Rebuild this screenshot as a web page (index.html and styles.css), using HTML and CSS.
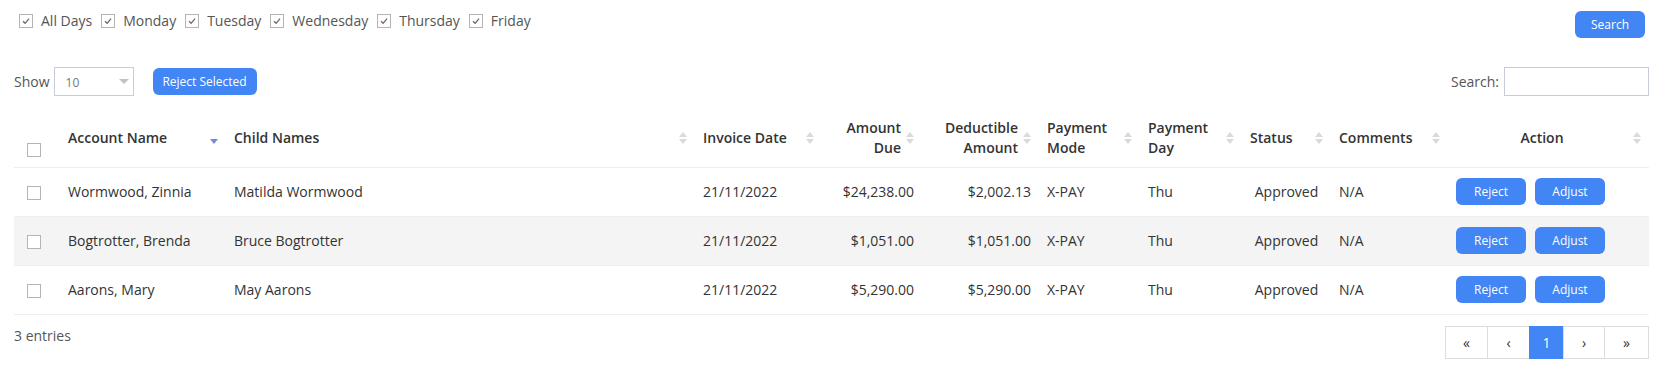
FILE: index.html
```html
<!DOCTYPE html>
<html lang="en">
	<head>
		<meta charset="utf-8">

		<title>Invoice Approvals</title>

		<link rel="stylesheet" href="styles.css">
	</head>
	<body>
	<div class="page">
		<div class="filters">
			<div class="days">
				<label class="day"><span class="box"><svg viewBox="0 0 14 14"><polyline points="3.5,7.2 6,9.7 10.5,4.2"/></svg></span>All Days</label>
				<label class="day"><span class="box"><svg viewBox="0 0 14 14"><polyline points="3.5,7.2 6,9.7 10.5,4.2"/></svg></span>Monday</label>
				<label class="day"><span class="box"><svg viewBox="0 0 14 14"><polyline points="3.5,7.2 6,9.7 10.5,4.2"/></svg></span>Tuesday</label>
				<label class="day"><span class="box"><svg viewBox="0 0 14 14"><polyline points="3.5,7.2 6,9.7 10.5,4.2"/></svg></span>Wednesday</label>
				<label class="day"><span class="box"><svg viewBox="0 0 14 14"><polyline points="3.5,7.2 6,9.7 10.5,4.2"/></svg></span>Thursday</label>
				<label class="day"><span class="box"><svg viewBox="0 0 14 14"><polyline points="3.5,7.2 6,9.7 10.5,4.2"/></svg></span>Friday</label>
			</div>
			<button class="btn btn-search">Search</button>
		</div>

		<div class="toolbar">
			<div class="length">
				<span>Show</span>
				<span class="select">10<i class="caret"></i></span>
				<button class="btn btn-wide">Reject Selected</button>
			</div>
			<div class="search">
				<span>Search:</span>
				<input type="text">
			</div>
		</div>

		<table class="grid">
			<colgroup>
				<col style="width:46px">
				<col style="width:166px">
				<col style="width:469px">
				<col style="width:127px">
				<col style="width:100px">
				<col style="width:117px">
				<col style="width:101px">
				<col style="width:102px">
				<col style="width:89px">
				<col style="width:117px">
				<col style="width:201px">
			</colgroup>
			<thead>
				<tr>
					<th class="check"><span class="box"></span></th>
					<th class="sort-desc">Account Name</th>
					<th class="sort">Child Names</th>
					<th class="sort">Invoice Date</th>
					<th class="sort num">Amount<br>Due</th>
					<th class="sort num">Deductible<br>Amount</th>
					<th class="sort">Payment<br>Mode</th>
					<th class="sort">Payment<br>Day</th>
					<th class="sort">Status</th>
					<th class="sort">Comments</th>
					<th class="sort center">Action</th>
				</tr>
			</thead>
			<tbody>
				<tr>
					<td class="check"><span class="box"></span></td>
					<td>Wormwood, Zinnia</td>
					<td>Matilda Wormwood</td>
					<td>21/11/2022</td>
					<td class="num">$24,238.00</td>
					<td class="num">$2,002.13</td>
					<td>X-PAY</td>
					<td>Thu</td>
					<td class="center">Approved</td>
					<td>N/A</td>
					<td><button class="btn btn-row">Reject</button><button class="btn btn-row">Adjust</button></td>
				</tr>
				<tr class="odd">
					<td class="check"><span class="box"></span></td>
					<td>Bogtrotter, Brenda</td>
					<td>Bruce Bogtrotter</td>
					<td>21/11/2022</td>
					<td class="num">$1,051.00</td>
					<td class="num">$1,051.00</td>
					<td>X-PAY</td>
					<td>Thu</td>
					<td class="center">Approved</td>
					<td>N/A</td>
					<td><button class="btn btn-row">Reject</button><button class="btn btn-row">Adjust</button></td>
				</tr>
				<tr>
					<td class="check"><span class="box"></span></td>
					<td>Aarons, Mary</td>
					<td>May Aarons</td>
					<td>21/11/2022</td>
					<td class="num">$5,290.00</td>
					<td class="num">$5,290.00</td>
					<td>X-PAY</td>
					<td>Thu</td>
					<td class="center">Approved</td>
					<td>N/A</td>
					<td><button class="btn btn-row">Reject</button><button class="btn btn-row">Adjust</button></td>
				</tr>
			</tbody>
		</table>

		<div class="footer">
			<div class="info">3 entries</div>
			<ul class="pager">
				<li class="first">&laquo;</li>
				<li class="prev">&lsaquo;</li>
				<li class="current">1</li>
				<li class="next">&rsaquo;</li>
				<li class="last">&raquo;</li>
			</ul>
		</div>
	</div>
	</body>
</html>
```

FILE: styles.css
```css
body {
	margin: 0;
	background: #fff;
	color: #333;

	font-family: "Open Sans", "Liberation Sans", sans-serif;
	font-size: 14px;
	line-height: 20px;
}

div.page
{
	padding: 0 11px 0 14px;
}

/* buttons */

.btn {
	display: inline-block;
	height: 27px;
	padding: 0;
	border: none;
	border-radius: 6px;

	background: #4285f4;
	color: #fff;

	font-family: inherit;
	font-size: 12px;
	line-height: 27px;
	text-align: center;
}

.btn-search { width: 70px; }
.btn-wide { width: 104px; }

.btn-row {
	width: 70px;
	vertical-align: middle;
}

.btn-row + .btn-row {
	margin-left: 9px;
}

/* checkboxes */

.box {
	display: inline-block;
	box-sizing: border-box;
	width: 14px;
	height: 14px;
	border: 1px solid #b4b4b4;
	background: #fff;
	vertical-align: middle;
}

.box svg {
	display: block;
	width: 12px;
	height: 12px;
	fill: none;
	stroke: #6a6a6a;
	stroke-width: 1.5;
}

/* day filters */

div.filters {
	display: flex;
	justify-content: space-between;
	align-items: flex-start;
	height: 27px;
	padding: 11px 4px 0 5px;
}

div.days {
	display: flex;
	align-items: center;
}

label.day {
	display: flex;
	align-items: center;
	margin-right: 9px;
	color: #555;
}

label.day .box {
	margin-right: 8px;
}

/* length + search bar */

div.toolbar {
	display: flex;
	justify-content: space-between;
	align-items: center;
	height: 29px;
	margin-top: 29px;
	color: #555;
}

div.length,
div.search {
	display: flex;
	align-items: center;
}

.select {
	position: relative;
	box-sizing: border-box;
	width: 80px;
	height: 29px;
	margin: 0 19px 0 4px;
	padding-left: 11px;
	border: 1px solid #c6cdd9;

	color: #777;
	font-size: 12px;
	line-height: 29px;
}

.select .caret {
	position: absolute;
	right: 4px;
	top: 11px;
	border-left: 5px solid transparent;
	border-right: 5px solid transparent;
	border-top: 5px solid #c2c2c2;
}

div.search input {
	box-sizing: border-box;
	width: 145px;
	height: 29px;
	margin: 0 0 0 5px;
	border: 1px solid #c6cdd9;
	font-family: inherit;
}

/* table */

table.grid {
	width: 100%;
	margin-top: 12px;
	border-collapse: collapse;
	table-layout: fixed;
}

table.grid th {
	position: relative;
	padding: 10px 21px 9px 8px;
	border-bottom: 1px solid #eee;

	font-weight: 600;
	text-align: left;
	vertical-align: middle;
}

table.grid td {
	padding: 10px 8px 11px;
	border-top: 1px solid #eee;
	vertical-align: middle;
	white-space: nowrap;
}

table.grid tbody tr:last-child td {
	border-bottom: 1px solid #eee;
}

table.grid tr.odd td {
	background: #f4f4f4;
}

table.grid th.check {
	padding: 0 0 10px 13px;
	vertical-align: bottom;
}

table.grid th.check .box {
	display: block;
}

table.grid td.check {
	padding-left: 13px;
}

table.grid .num { text-align: right; }
table.grid .center { text-align: center; }

/* sort arrows */

th.sort::before,
th.sort::after,
th.sort-desc::after {
	content: "";
	position: absolute;
	right: 8px;
	border-left: 4px solid transparent;
	border-right: 4px solid transparent;
}

th.sort::before {
	top: 50%;
	margin-top: -6px;
	border-bottom: 5px solid #dadada;
}

th.sort::after {
	top: 50%;
	margin-top: 1px;
	border-top: 5px solid #dadada;
}

th.sort-desc::after {
	top: 50%;
	margin-top: 1px;
	border-top: 5px solid #7d86d8;
}

/* footer */

div.footer {
	display: flex;
	justify-content: space-between;
	align-items: flex-start;
	height: 33px;
	margin-top: 11px;
	color: #555;
}

ul.pager {
	display: flex;
	margin: 0;
	padding: 0;
	list-style: none;
}

ul.pager li {
	box-sizing: border-box;
	height: 33px;
	margin-left: -1px;
	border: 1px solid #ddd;

	color: #333;
	font-size: 14px;
	line-height: 31px;
	text-align: center;
}

ul.pager li.first { width: 43px; margin-left: 0; }
ul.pager li.prev { width: 43px; }
ul.pager li.current {
	width: 35px;
	background: #4285f4;
	border-color: #4285f4;
	color: #fff;
}
ul.pager li.next { width: 42px; }
ul.pager li.last { width: 45px; }
```
